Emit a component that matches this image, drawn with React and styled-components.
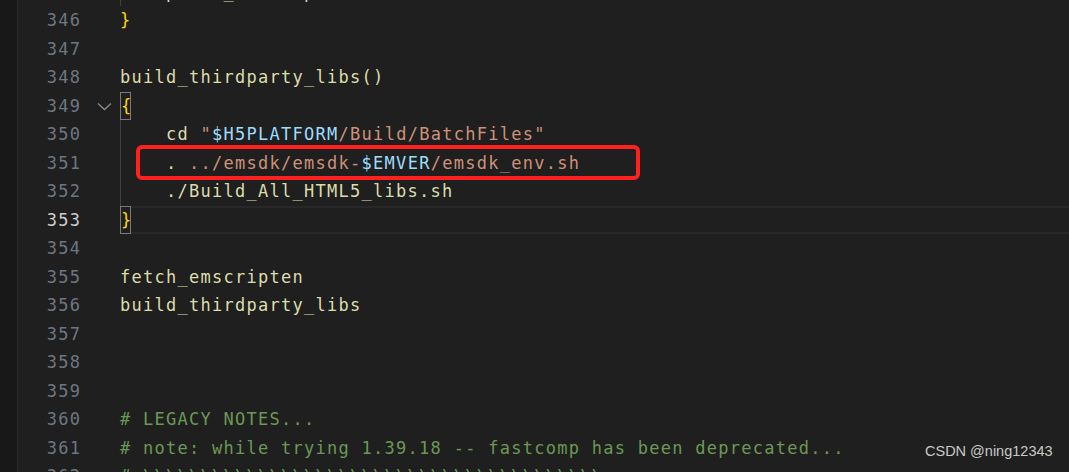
import React from "react";
import styled, { createGlobalStyle } from "styled-components";

const GlobalStyle = createGlobalStyle`
  html, body {
    margin: 0;
    padding: 0;
    background: #1f1f1f;
    overflow: hidden;
  }
`;

const Window = styled.div`
  position: relative;
  display: flex;
  width: 1069px;
  height: 472px;
  overflow: hidden;
  background: #1f1f1f;
`;

const SideStrip = styled.div`
  flex: none;
  width: 17px;
  background: #181818;
  border-right: 1px solid #2b2b2b;
`;

const Editor = styled.div`
  flex: 1;
  overflow: hidden;
  font-family: "DejaVu Sans Mono", "Liberation Mono", monospace;
  font-size: 17px;
  letter-spacing: 1.27px;
`;

const Lines = styled.div`
  display: flex;
  flex-direction: column;
  margin-top: -22.3px;
`;

const Line = styled.div`
  display: grid;
  grid-template-columns: 63.3px 38.7px 1fr;
  height: 28.5px;
  line-height: 28.5px;
  white-space: pre;
`;

const LineNo = styled.span`
  text-align: right;
  color: ${(p) => (p.$current ? "#cccccc" : "#6e7681")};
`;

const FoldCell = styled.span`
  display: flex;
  align-items: center;
  padding-left: 16px;
  padding-top: 2px;
`;

const CodeCell = styled.span`
  display: flex;
  align-items: stretch;
  box-shadow: ${(p) => (p.$guide ? "inset 1px 0 0 #404040" : "none")};
`;

const colors = {
  fn: "#dcdcaa",
  str: "#ce9178",
  vr: "#9cdcfe",
  brace: "#ffd700",
  comment: "#6a9955",
};

const Token = styled.span`
  color: ${(p) => colors[p.$kind] || "#d4d4d4"};
`;

const BraceBox = styled.span`
  box-sizing: border-box;
  width: 11.5px;
  border: 1px solid #7a7a7a;
  color: #ffd700;
  letter-spacing: 0;
  text-align: center;
  line-height: 26.5px;
`;

const CurrentLineFill = styled.span`
  flex: 1;
  box-sizing: border-box;
  border-top: 2px solid #282828;
  border-bottom: 2px solid #282828;
`;

const Annotation = styled.div`
  position: absolute;
  left: 136px;
  top: 145px;
  width: 504px;
  height: 35px;
  box-sizing: border-box;
  border: 4px solid #ff2020;
  border-radius: 6px;
`;

const Watermark = styled.div`
  position: absolute;
  left: 925px;
  top: 443px;
  font-family: "Liberation Sans", Arial, sans-serif;
  font-size: 14.5px;
  color: #c9c9c9;
  white-space: nowrap;
`;

const Chevron = () => (
  <svg width="15" height="9" viewBox="0 0 15 9">
    <polyline
      points="1,1.5 7.5,7.5 14,1.5"
      fill="none"
      stroke="#8a8a8a"
      strokeWidth="1.3"
    />
  </svg>
);

const lines = [
  { n: 345, guide: true, tokens: [["fn", "    patch_emscripten"]] },
  { n: 346, tokens: [["brace", "}"]] },
  { n: 347, tokens: [] },
  { n: 348, tokens: [["fn", "build_thirdparty_libs()"]] },
  { n: 349, fold: true, box: "{" },
  {
    n: 350,
    guide: true,
    tokens: [
      ["fn", "    cd"],
      ["plain", " "],
      ["str", '"'],
      ["vr", "$H5PLATFORM"],
      ["str", '/Build/BatchFiles"'],
    ],
  },
  {
    n: 351,
    guide: true,
    tokens: [
      ["fn", "    ."],
      ["plain", " "],
      ["str", "../emsdk/emsdk-"],
      ["vr", "$EMVER"],
      ["str", "/emsdk_env.sh"],
    ],
  },
  { n: 352, guide: true, tokens: [["fn", "    ./Build_All_HTML5_libs.sh"]] },
  { n: 353, current: true, box: "}" },
  { n: 354, tokens: [] },
  { n: 355, tokens: [["fn", "fetch_emscripten"]] },
  { n: 356, tokens: [["fn", "build_thirdparty_libs"]] },
  { n: 357, tokens: [] },
  { n: 358, tokens: [] },
  { n: 359, tokens: [] },
  { n: 360, tokens: [["comment", "# LEGACY NOTES..."]] },
  {
    n: 361,
    tokens: [
      ["comment", "# note: while trying 1.39.18 -- fastcomp has been deprecated..."],
    ],
  },
  { n: 362, tokens: [["comment", "# " + "\\".repeat(40)]] },
];

export default function App() {
  return (
    <>
      <GlobalStyle />
      <Window>
        <SideStrip />
        <Editor>
          <Lines>
            {lines.map((l) => (
              <Line key={l.n}>
                <LineNo $current={l.current}>{l.n}</LineNo>
                <FoldCell>{l.fold ? <Chevron /> : null}</FoldCell>
                <CodeCell $guide={l.guide}>
                  {l.box ? <BraceBox>{l.box}</BraceBox> : null}
                  {l.current ? <CurrentLineFill /> : null}
                  {(l.tokens || []).map(([k, t], i) => (
                    <Token key={i} $kind={k}>
                      {t}
                    </Token>
                  ))}
                </CodeCell>
              </Line>
            ))}
          </Lines>
        </Editor>
        <Annotation />
        <Watermark>CSDN @ning12343</Watermark>
      </Window>
    </>
  );
}
